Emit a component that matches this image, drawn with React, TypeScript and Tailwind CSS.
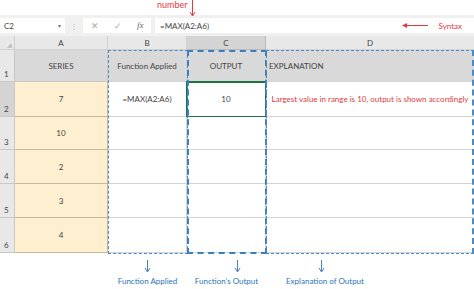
import React from "react";

const rows = [
  { n: "1", h: 32 },
  { n: "2", h: 35 },
  { n: "3", h: 33 },
  { n: "4", h: 34 },
  { n: "5", h: 34 },
  { n: "6", h: 35 },
];

const series = ["7", "10", "2", "3", "4"];

function DownArrow({ color, h = 12 }: { color: string; h?: number }) {
  return (
    <svg width="7" height={h} viewBox={`0 0 7 ${h}`} className="shrink-0">
      <line x1="3.5" y1="0" x2="3.5" y2={h - 1} stroke={color} strokeWidth="1" />
      <path d={`M1 ${h - 4} L3.5 ${h} L6 ${h - 4}`} fill="none" stroke={color} strokeWidth="1" />
    </svg>
  );
}

function LeftArrow() {
  return (
    <svg width="26" height="7" viewBox="0 0 26 7" className="shrink-0">
      <line x1="2" y1="3.5" x2="26" y2="3.5" stroke="#e03a3e" strokeWidth="1" />
      <path d="M0 3.5 L5 1 L5 6 Z" fill="#e03a3e" />
    </svg>
  );
}

export default function App() {
  return (
    <div className="w-[474px] h-[289px] overflow-hidden bg-white text-[#444] font-['Lato','Liberation_Sans',sans-serif]">
      {/* top annotation */}
      <div className="h-[15px] flex items-start pl-[157px] gap-[1px]">
        <span className="text-[9px] leading-[9px] text-[#e03a3e]">number</span>
        <DownArrow color="#e03a3e" h={16} />
      </div>

      {/* formula bar */}
      <div className="h-[21px] bg-[#f0f0f0] flex items-center gap-[4px]">
        <div className="w-[65px] h-[15px] bg-white flex items-center justify-between px-[4px] text-[8px]">
          <span>C2</span>
          <span className="text-[6px] text-[#777]">▾</span>
        </div>
        <div className="w-[10px] flex justify-center text-[8px] text-[#bbb]">⋮</div>
        <div className="w-[68px] h-[15px] bg-white flex items-center justify-around text-[9px] text-[#aaa]">
          <span>✕</span>
          <span>✓</span>
          <span className="italic font-['Liberation_Serif',serif] text-[#666]">fx</span>
        </div>
        <div className="flex-1 h-[15px] bg-white flex items-center pl-[5px] pr-[12px] text-[8px]">
          <span>=MAX(A2:A6)</span>
          <div className="ml-auto flex items-center gap-[11px]">
            <LeftArrow />
            <span className="text-[8px] text-[#e03a3e]">Syntax</span>
          </div>
        </div>
      </div>

      {/* sheet */}
      <div className="relative">
        <div className="grid grid-cols-[15px_93px_79px_79px_208px] text-[8px]">
          {/* column headers */}
          <div className="h-[14px] bg-[#e8e8e8] border-r border-b border-[#d0d0d0] flex items-end justify-end pr-[2px]">
            <span className="text-[6px] leading-[8px] text-[#bbb]">◢</span>
          </div>
          <div className="h-[14px] bg-[#e8e8e8] border-r border-b border-[#d0d0d0] flex items-center justify-center">A</div>
          <div className="h-[14px] bg-[#e8e8e8] border-r border-b border-[#d0d0d0] flex items-center justify-center">B</div>
          <div className="h-[14px] bg-[#d4d4d4] border-r border-b border-[#b8b8b8] flex items-center justify-center">C</div>
          <div className="h-[14px] bg-[#e8e8e8] border-b border-[#d0d0d0] flex items-center justify-center">D</div>

          {rows.map((r, i) => {
            const isHead = i === 0;
            const isSel = i === 1;
            const cell = isHead ? "bg-[#d9d9d9]" : "bg-white";
            return (
              <React.Fragment key={r.n}>
                <div
                  style={{ height: r.h }}
                  className={`${isSel ? "bg-[#d4d4d4]" : "bg-[#e8e8e8]"} border-r border-b border-[#c8c8c8] flex items-end pl-[4px] pb-[1px] text-[8px]`}
                >
                  {r.n}
                </div>
                <div
                  style={{ height: r.h }}
                  className={`${isHead ? "bg-[#d9d9d9] border-[#c8c8c8]" : "bg-[#fdefcf] border-[#c9b898]"} border-r border-b flex items-center justify-center`}
                >
                  {isHead ? "SERIES" : series[i - 1]}
                </div>
                <div
                  style={{ height: r.h }}
                  className={`${cell} border-r border-b border-[#d4d4d4] flex items-center justify-center`}
                >
                  {isHead ? "Function Applied" : isSel ? "=MAX(A2:A6)" : ""}
                </div>
                <div
                  style={{ height: r.h }}
                  className={`${cell} border-r border-b border-[#d4d4d4] flex items-center justify-center ${isSel ? "outline outline-2 outline-[#217346] -outline-offset-1" : ""}`}
                >
                  {isHead ? "OUTPUT" : isSel ? "10" : ""}
                </div>
                <div
                  style={{ height: r.h }}
                  className={`${cell} border-b border-[#d4d4d4] flex items-center ${isSel ? "justify-center text-[#e03a3e]" : "pl-[3px]"}`}
                >
                  {isHead ? "EXPLANATION" : isSel ? "Largest value in range is 10, output is shown accordingly" : ""}
                </div>
              </React.Fragment>
            );
          })}
        </div>

        {/* dashed copy marquees lying over the cells */}
        <div className="absolute left-[108px] top-[14px] w-[80px] h-[204px] border border-dashed border-[#4a8cc8]" />
        <div className="absolute left-[187px] top-[14px] w-[80px] h-[204px] border-2 border-dashed border-[#3b7fc0]" />
        <div className="absolute left-[266px] top-[14px] w-[208px] h-[204px] border border-dashed border-[#4a8cc8] border-r-2" />
      </div>

      {/* bottom labels */}
      <div className="grid grid-cols-[108px_79px_79px_208px] pt-[7px] text-[8px] text-[#2e75b6]">
        <div />
        <div className="flex flex-col items-center gap-[3px]">
          <DownArrow color="#4a7fc0" />
          <span>Function Applied</span>
        </div>
        <div className="flex flex-col items-center gap-[3px]">
          <div className="pl-[22px]">
            <DownArrow color="#4a7fc0" />
          </div>
          <span className="whitespace-nowrap">Function’s Output</span>
        </div>
        <div className="flex flex-col items-start gap-[3px] pl-[20px]">
          <div className="pl-[32px]">
            <DownArrow color="#4a7fc0" />
          </div>
          <span>Explanation of Output</span>
        </div>
      </div>
    </div>
  );
}
